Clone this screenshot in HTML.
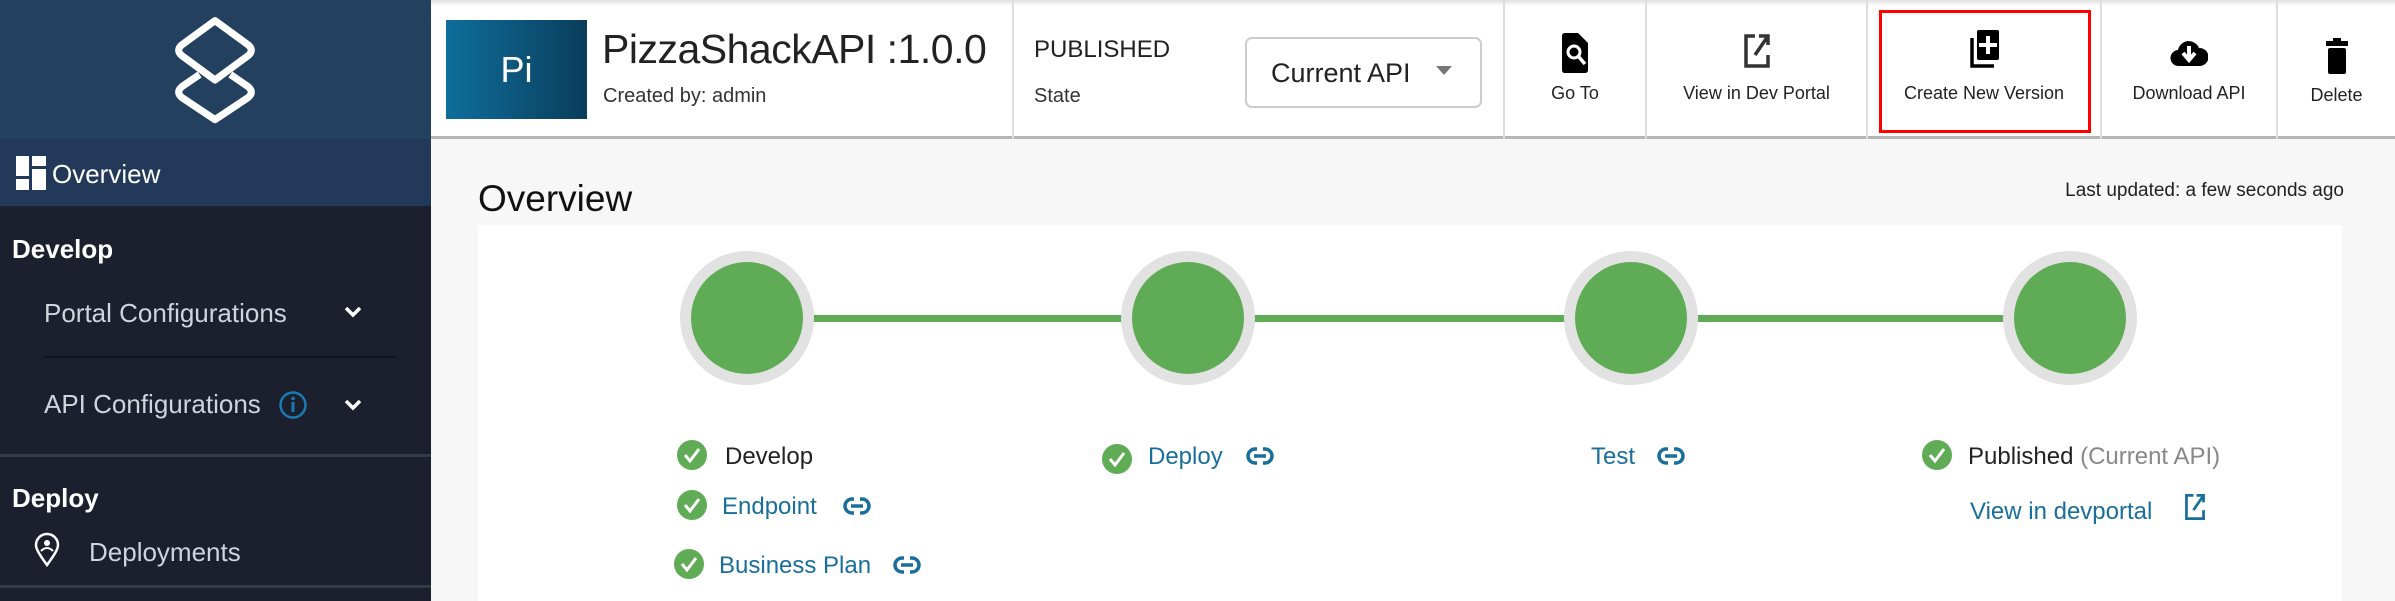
<!DOCTYPE html>
<html><head><meta charset="utf-8"><style>
*{margin:0;padding:0;box-sizing:border-box}
body{width:2395px;height:601px;overflow:hidden;font-family:"Liberation Sans",sans-serif;background:#f7f7f7;position:relative}
.a{position:absolute;white-space:nowrap}
#sb{position:absolute;left:0;top:0;width:431px;height:601px;background:#1b1f2e}
.lnk{color:#1a6e9c}
.btn{position:absolute;top:0;height:139px;text-align:center;font-size:18px;color:#222}
.btn svg{position:absolute;left:50%;transform:translateX(-50%);top:33px}
.btn span{position:absolute;left:0;right:0;top:83px}
.vl{position:absolute;top:0;width:2px;height:139px;background:#ddd}
</style></head><body>
<div id="sb">
 <div class="a" style="left:0;top:0;width:431px;height:139px;background:#24405f"></div>
 <svg class="a" style="left:160px;top:14px" width="110" height="110" viewBox="0 0 100 100" fill="none" stroke="#fff" stroke-width="6.5" stroke-linejoin="round"><path d="M50 6 L80 28 Q86 33 80 38 L50 60 L20 38 Q14 33 20 28 Z"/><path d="M36 55 L20 66 Q14 71 20 76 L50 96 L80 76 Q86 71 80 66 L64 55"/></svg>
 <div class="a" style="left:0;top:139px;width:431px;height:67px;background:#22395a"></div>
 <svg class="a" style="left:16px;top:156px" width="32" height="34"><rect x="0" y="0" width="13" height="20" fill="#fff"/><rect x="16" y="0" width="14" height="10" fill="#fff"/><rect x="0" y="23" width="13" height="11" fill="#fff"/><rect x="16" y="13" width="14" height="21" fill="#fff"/></svg>
 <div class="a" style="left:52px;top:159px;font-size:26px;color:#fff">Overview</div>
 <div class="a" style="left:12px;top:234px;font-size:26px;color:#fff;font-weight:bold">Develop</div>
 <div class="a" style="left:44px;top:298px;font-size:26px;color:#d0d4dc">Portal Configurations</div>
 <svg class="a" style="left:343px;top:305px" width="20" height="14"><path d="M3 3 L10 10 L17 3" stroke="#fff" stroke-width="3.5" fill="none"/></svg>
 <div class="a" style="left:43px;top:356px;width:354px;height:2px;background:#11131c"></div>
 <div class="a" style="left:44px;top:389px;font-size:26px;color:#d0d4dc">API Configurations</div>
 <svg class="a" style="left:278px;top:390px" width="30" height="30"><circle cx="15" cy="15" r="12.5" stroke="#1a7bb0" stroke-width="2.5" fill="none"/><rect x="13.5" y="12" width="3" height="10" fill="#1a7bb0"/><circle cx="15" cy="8.5" r="1.8" fill="#1a7bb0"/></svg>
 <svg class="a" style="left:343px;top:398px" width="20" height="14"><path d="M3 3 L10 10 L17 3" stroke="#fff" stroke-width="3.5" fill="none"/></svg>
 <div class="a" style="left:0;top:454px;width:431px;height:3px;background:#353a48"></div>
 <div class="a" style="left:12px;top:483px;font-size:26px;color:#fff;font-weight:bold">Deploy</div>
 <svg class="a" style="left:33px;top:532px" width="28" height="36"><path d="M14 33 C6 22 3 17 3 13 A11 11 0 0 1 25 13 C25 17 22 22 14 33 Z" stroke="#fff" stroke-width="2.5" fill="none"/><circle cx="14" cy="11" r="3" fill="#fff"/><path d="M8 19 Q14 13 20 19" stroke="#fff" stroke-width="2" fill="none"/></svg>
 <div class="a" style="left:89px;top:537px;font-size:26px;color:#d0d4dc">Deployments</div>
 <div class="a" style="left:0;top:585px;width:431px;height:3px;background:#353a48"></div>
</div>
<div class="a" style="left:431px;top:0;width:1964px;height:139px;background:#fff;border-bottom:3px solid #b5b5b5"></div>
<div class="a" style="left:431px;top:0;width:1964px;height:6px;background:linear-gradient(#e0e0e0,#fff)"></div>
<div class="a" style="left:446px;top:20px;width:141px;height:99px;background:linear-gradient(90deg,#0e6e9a,#0a3d5c);color:#fff;font-size:36px;text-align:center;line-height:99px">Pi</div>
<div class="a" style="left:602px;top:26px;font-size:41px;color:#222;letter-spacing:-0.5px">PizzaShackAPI :1.0.0</div>
<div class="a" style="left:603px;top:85px;font-size:20px;color:#333">Created by: admin</div>
<div class="vl" style="left:1012px"></div>
<div class="a" style="left:1034px;top:36px;font-size:24px;color:#222">PUBLISHED</div>
<div class="a" style="left:1034px;top:85px;font-size:20px;color:#333">State</div>
<div class="a" style="left:1245px;top:37px;width:237px;height:71px;border:2px solid #ccc;border-radius:7px;font-size:27px;color:#222;padding:19px 0 0 24px">Current API</div>
<svg class="a" style="left:1436px;top:66px" width="16" height="10"><path d="M0 0 L16 0 L8 9Z" fill="#777"/></svg>
<div class="vl" style="left:1503px"></div>
<div class="vl" style="left:1645px"></div>
<div class="vl" style="left:1866px"></div>
<div class="vl" style="left:2100px"></div>
<div class="vl" style="left:2276px"></div>
<div class="btn" style="left:1505px;width:140px"><svg width="26" height="40" viewBox="0 0 26 40"><path d="M0 3 Q0 0 3 0 L16 0 L26 10 L26 37 Q26 40 23 40 L3 40 Q0 40 0 37Z" fill="#000"/><circle cx="12" cy="19" r="6" stroke="#fff" stroke-width="3" fill="none"/><path d="M16 23 L23 31" stroke="#fff" stroke-width="3.5"/></svg><span>Go To</span></div>
<div class="btn" style="left:1647px;width:219px"><svg width="28" height="36" viewBox="0 0 28 36"><path d="M12 3 L3 3 L3 33 L25 33 L25 22" stroke="#333" stroke-width="3.5" fill="none"/><path d="M16 3 L25 3 L25 12 M25 3 L12 22" stroke="#333" stroke-width="3.5" fill="none"/></svg><span>View in Dev Portal</span></div>
<div class="btn" style="left:1868px;width:232px"><svg width="30" height="40" viewBox="0 0 30 40" style="top:28px"><path d="M3 10 L3 38 L25 38" stroke="#000" stroke-width="3.5" fill="none"/><rect x="8" y="2" width="22" height="30" rx="2" fill="#000"/><path d="M19 8 L19 26 M10 17 L28 17" stroke="#fff" stroke-width="4"/></svg><span>Create New Version</span></div>
<div class="a" style="left:1879px;top:10px;width:212px;height:123px;border:3.5px solid #f00"></div>
<div class="btn" style="left:2102px;width:174px"><svg width="38" height="32" viewBox="0 0 38 32" style="top:36px"><path d="M9 30 A8 8 0 0 1 8 14 A11 11 0 0 1 29 12 A9 9 0 0 1 30 30Z" fill="#000"/><path d="M19 10 L19 22 M13 17 L19 24 L25 17" stroke="#fff" stroke-width="4" fill="none"/></svg><span>Download API</span></div>
<div class="btn" style="left:2278px;width:117px"><svg width="22" height="36" viewBox="0 0 22 36" style="top:38px"><rect x="7" y="0" width="8" height="4" fill="#000"/><rect x="0" y="3" width="22" height="5" fill="#000"/><rect x="2" y="10" width="18" height="26" rx="2" fill="#000"/></svg><span style="top:85px">Delete</span></div>
<div class="a" style="left:478px;top:178px;font-size:37px;color:#111">Overview</div>
<div class="a" style="right:51px;top:180px;font-size:19px;color:#222">Last updated: a few seconds ago</div>
<div class="a" style="left:478px;top:225px;width:1864px;height:376px;background:#fff"></div>
<div class="a" style="left:747px;top:315px;width:1323px;height:7px;background:#60ac56"></div>
<div class="a" style="left:680px;top:251px;width:134px;height:134px;border-radius:50%;background:#e2e2e2"></div>
<div class="a" style="left:691px;top:262px;width:112px;height:112px;border-radius:50%;background:#60ac56"></div>
<div class="a" style="left:1121px;top:251px;width:134px;height:134px;border-radius:50%;background:#e2e2e2"></div>
<div class="a" style="left:1132px;top:262px;width:112px;height:112px;border-radius:50%;background:#60ac56"></div>
<div class="a" style="left:1564px;top:251px;width:134px;height:134px;border-radius:50%;background:#e2e2e2"></div>
<div class="a" style="left:1575px;top:262px;width:112px;height:112px;border-radius:50%;background:#60ac56"></div>
<div class="a" style="left:2003px;top:251px;width:134px;height:134px;border-radius:50%;background:#e2e2e2"></div>
<div class="a" style="left:2014px;top:262px;width:112px;height:112px;border-radius:50%;background:#60ac56"></div>
<svg width="0" height="0" style="position:absolute"><defs>
<g id="ck"><circle cx="15" cy="15" r="15" fill="#60ac56"/><path d="M8 15 L13 21 L22 9" stroke="#fff" stroke-width="3" fill="none"/></g>
<g id="lk"><rect x="2" y="2" width="24" height="14" rx="7" stroke="#1a6e9c" stroke-width="3.5" fill="none"/><rect x="11" y="0" width="6" height="18" fill="#fff"/><path d="M8 9 L20 9" stroke="#1a6e9c" stroke-width="3.5"/></g>
</defs></svg>
<svg class="a" style="left:677px;top:440px" width="30" height="30"><use href="#ck"/></svg>
<div class="a" style="left:725px;top:443px;font-size:24px;color:#222">Develop</div>
<svg class="a" style="left:677px;top:490px" width="30" height="30"><use href="#ck"/></svg>
<div class="a lnk" style="left:722px;top:493px;font-size:24px">Endpoint</div>
<svg class="a" style="left:843px;top:497px" width="28" height="18"><use href="#lk"/></svg>
<svg class="a" style="left:674px;top:549px" width="30" height="30"><use href="#ck"/></svg>
<div class="a lnk" style="left:719px;top:552px;font-size:24px">Business Plan</div>
<svg class="a" style="left:893px;top:556px" width="28" height="18"><use href="#lk"/></svg>
<svg class="a" style="left:1102px;top:444px" width="30" height="30"><use href="#ck"/></svg>
<div class="a lnk" style="left:1148px;top:443px;font-size:24px">Deploy</div>
<svg class="a" style="left:1246px;top:447px" width="28" height="18"><use href="#lk"/></svg>
<div class="a lnk" style="left:1591px;top:443px;font-size:24px">Test</div>
<svg class="a" style="left:1657px;top:447px" width="28" height="18"><use href="#lk"/></svg>
<svg class="a" style="left:1922px;top:440px" width="30" height="30"><use href="#ck"/></svg>
<div class="a" style="left:1968px;top:443px;font-size:24px;color:#222">Published <span style="color:#888">(Current API)</span></div>
<div class="a lnk" style="left:1970px;top:498px;font-size:24px">View in devportal</div>
<svg class="a" style="left:2181px;top:493px" width="28" height="28" viewBox="0 0 28 36"><path d="M12 3 L3 3 L3 33 L25 33 L25 22" stroke="#1a6e9c" stroke-width="3.5" fill="none"/><path d="M16 3 L25 3 L25 12 M25 3 L12 22" stroke="#1a6e9c" stroke-width="3.5" fill="none"/></svg>
</body></html>
